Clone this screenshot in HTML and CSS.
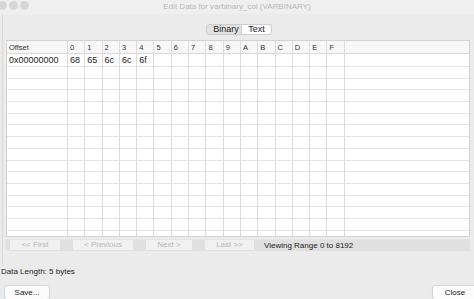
FILE: index.html
```html
<!DOCTYPE html>
<html lang="en">
<head>
    <meta charset="UTF-8">
    <title>Edit Data for varbinary_col (VARBINARY)</title>
    <link rel="stylesheet" href="styles.css">
</head>
<body>
    <div class="titlebar">
        <div class="lights"><span></span><span></span><span></span></div>
        <div class="title">Edit Data for varbinary_col (VARBINARY)</div>
        <div></div>
    </div>

    <div class="main">
        <div class="segments">
            <button class="seg seg-on">Binary</button>
            <button class="seg">Text</button>
        </div>

        <div class="grid-wrap">
            <table class="grid">
                <colgroup>
                    <col class="c-off">
                    <col class="c-hex"><col class="c-hex"><col class="c-hex"><col class="c-hex">
                    <col class="c-hex"><col class="c-hex"><col class="c-hex"><col class="c-hex">
                    <col class="c-hex"><col class="c-hex"><col class="c-hex"><col class="c-hex">
                    <col class="c-hex"><col class="c-hex"><col class="c-hex"><col class="c-hex">
                    <col>
                </colgroup>
                <thead>
                    <tr class="head">
                        <th>Offset</th>
                        <th>0</th><th>1</th><th>2</th><th>3</th><th>4</th><th>5</th><th>6</th><th>7</th>
                        <th>8</th><th>9</th><th>A</th><th>B</th><th>C</th><th>D</th><th>E</th><th>F</th>
                        <th></th>
                    </tr>
                </thead>
                <tbody id="rows">
                    <tr class="first">
                        <td>0x00000000</td>
                        <td>68</td><td>65</td><td>6c</td><td>6c</td><td>6f</td>
                        <td></td><td></td><td></td><td></td><td></td><td></td>
                        <td></td><td></td><td></td><td></td><td></td><td></td>
                    </tr>
                </tbody>
            </table>
        </div>

        <div class="nav">
            <button class="nav-btn w-first">&lt;&lt; First</button>
            <button class="nav-btn w-prev">&lt; Previous</button>
            <button class="nav-btn w-next">Next &gt;</button>
            <button class="nav-btn w-last">Last &gt;&gt;</button>
            <span class="range">Viewing Range 0 to 8192</span>
        </div>
    </div>

    <div class="length">Data Length: 5 bytes</div>

    <div class="footer">
        <button class="btn">Save...</button>
        <button class="btn btn-close">Close</button>
    </div>

    <script>
      // empty rows to fill the grid
      const rows = document.getElementById('rows');
      for (let i = 0; i < 15; i++) {
        const tr = document.createElement('tr');
        tr.className = 'empty';
        tr.innerHTML = '<td></td>'.repeat(18);
        rows.appendChild(tr);
      }
    </script>
</body>
</html>
```

FILE: styles.css
```css
body {
    margin: 0;
    width: 474px;
    height: 299px;
    overflow: hidden;
    background-color: #ebebeb;
    font-family: "Liberation Sans", Arial, sans-serif;
    font-size: 8px;
    color: #222;
}

.titlebar {
    display: grid;
    grid-template-columns: 1fr auto 1fr;
    height: 14px;
    background-color: #efefef;
}

.lights {
    display: flex;
    gap: 2px;
    margin-left: -2px;
    margin-top: 1px;
}

.lights span {
    width: 9px;
    height: 9px;
    border-radius: 50%;
    background-color: #d6d6d6;
}

.title {
    line-height: 14px;
    color: #b8b8b8;
    white-space: nowrap;
}

.main {
    margin-left: 2px;
    border-left: 1px solid #d9d9d9;
    padding: 0 4px 14px 3px;
}

.segments {
    display: flex;
    justify-content: center;
    padding-top: 10px;
    padding-left: 2px;
    margin-bottom: 5px;
}

.seg {
    font-family: inherit;
    font-size: 9px;
    color: #222;
    height: 11px;
    line-height: 9px;
    padding: 0 6px;
    margin: 0;
    border: 1px solid #cdcdcd;
    background-color: #fff;
    border-radius: 0 3px 3px 0;
    border-left: none;
}

.seg-on {
    width: 36px;
    background-color: #e2e2e2;
    border-left: 1px solid #cdcdcd;
    border-radius: 3px 0 0 3px;
}

.grid-wrap {
    height: 197px;
    overflow: hidden;
    background-color: #fff;
    border: 1px solid #d2d2d2;
    box-sizing: border-box;
}

.grid {
    width: 100%;
    table-layout: fixed;
    border-collapse: separate;
    border-spacing: 0;
}

.c-off {
    width: 61px;
}

.c-hex {
    width: 17.3px;
}

.grid th,
.grid td {
    padding: 0 0 0 2px;
    border-right: 1px solid #dcdcdc;
    border-bottom: 1px solid #e4e4e4;
    text-align: left;
    white-space: nowrap;
    overflow: hidden;
}

.grid th:last-child,
.grid td:last-child {
    border-right: none;
}

.grid th {
    font-weight: normal;
    font-size: 7.5px;
    color: #333;
    background-color: #f7f7f7;
    border-bottom-color: #d8d8d8;
}

.head {
    height: 13px;
}

.first {
    height: 13px;
    font-size: 9px;
}

.empty {
    height: 11.7px;
}

.nav {
    display: flex;
    align-items: center;
    height: 12px;
    margin-top: 2px;
    padding-left: 4px;
    background-color: #e0e0e0;
}

.nav-btn {
    font-family: inherit;
    font-size: 8px;
    height: 10px;
    line-height: 10px;
    padding: 0;
    margin-right: 13px;
    border: none;
    background-color: #f1f1f1;
    color: #b6b6b6;
}

.w-first { width: 50px; }
.w-prev { width: 60px; }
.w-next { width: 46px; }
.w-last { width: 49px; margin-right: 10px; }

.range {
    color: #222;
}

.length {
    margin-top: 2px;
    padding-left: 1px;
    line-height: 10px;
}

.footer {
    display: flex;
    justify-content: space-between;
    margin-top: 8px;
    padding-left: 4px;
    margin-right: -4px;
}

.btn {
    font-family: inherit;
    font-size: 8px;
    color: #222;
    width: 46px;
    height: 15px;
    padding: 0;
    border: 1px solid #d6d6d6;
    border-radius: 3px;
    background-color: #fcfcfc;
    box-shadow: 0 1px 1px rgba(0, 0, 0, 0.08);
}
```
